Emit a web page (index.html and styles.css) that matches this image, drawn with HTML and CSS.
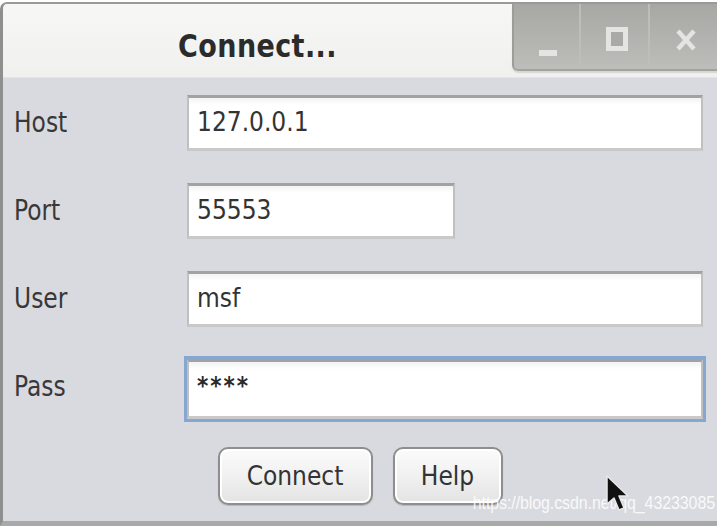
FILE: index.html
```html
<!DOCTYPE html>
<html lang="en">
<head>
<meta charset="utf-8">
<title>Connect...</title>
<link rel="stylesheet" href="styles.css">
</head>
<body>
<div class="window">
  <div class="titlebar">
    <div class="title">Connect...</div>
    <div class="wm-buttons">
      <div class="wm-btn wm-min">
        <svg class="wm-icon" viewBox="0 0 24 24" width="24" height="24"><rect x="3" y="17" width="18" height="6" fill="#e4e4e2"/></svg>
      </div>
      <div class="wm-btn wm-max">
        <svg class="wm-icon" viewBox="0 0 24 24" width="24" height="24"><rect x="3.5" y="2.5" width="17" height="19" fill="#a9a9a6" stroke="#e4e4e2" stroke-width="5"/></svg>
      </div>
      <div class="wm-btn wm-close">
        <svg class="wm-icon" viewBox="0 0 24 24" width="24" height="24"><path d="M4 3 L20 21 M20 3 L4 21" stroke="#e4e4e2" stroke-width="4.5" fill="none"/></svg>
      </div>
    </div>
  </div>
  <div class="content">
    <div class="form">
      <div class="label">Host</div>
      <div class="field"><span class="value">127.0.0.1</span></div>
      <div class="label">Port</div>
      <div class="field field-short"><span class="value">55553</span></div>
      <div class="label">User</div>
      <div class="field"><span class="value">msf</span></div>
      <div class="label">Pass</div>
      <div class="field field-focus"><span class="value value-pass">****</span></div>
    </div>
    <div class="actions">
      <button class="btn btn-connect">Connect</button>
      <button class="btn btn-help">Help</button>
    </div>
    <div class="watermark">https://blog.csdn.net/qq_43233085</div>
    <svg class="cursor" viewBox="0 0 30 40" width="30" height="40">
      <path d="M2 2 L2 30 L9 24 L14 36 L19 34 L14 22 L23 22 Z" fill="#111" stroke="#e8e8e8" stroke-width="1.5" stroke-linejoin="round"/>
    </svg>
  </div>
</div>
</body>
</html>
```
FILE: styles.css
```css
* { box-sizing: border-box; }

html, body {
  margin: 0;
  padding: 0;
  background: #ffffff;
}

body {
  width: 717px;
  height: 526px;
  overflow: hidden;
  font-family: "DejaVu Sans Condensed", "DejaVu Sans", sans-serif;
  font-stretch: condensed;
}

.window {
  margin-top: 2px;
  width: 717px;
  height: 524px;
  border-top: 2px solid #9a9a9a;
  border-left: 3px solid #8f8f8f;
  border-bottom: 5px solid #a9a9a9;
  border-top-left-radius: 7px;
  display: flex;
  flex-direction: column;
  overflow: hidden;
  background: #d9dadf;
}

.titlebar {
  height: 74px;
  flex: none;
  display: flex;
  align-items: flex-start;
  background: linear-gradient(#f7f7f6, #f0f0ef);
  border-bottom: 1px solid #e4e4e6;
}

.title {
  flex: 1;
  text-align: center;
  font-size: 30px;
  font-weight: bold;
  line-height: 30px;
  padding-top: 27px;
  color: #2b2b2b;
  letter-spacing: 0.4px;
  transform: scaleY(1.06);
}

.wm-buttons {
  width: 205px;
  height: 67px;
  display: flex;
  background: linear-gradient(#a7a7a4, #b6b6b3 70%, #bdbdba);
  border-left: 2px solid #9c9c99;
  border-bottom: 2px solid #a2a29f;
  border-bottom-left-radius: 6px;
  box-shadow: 0 2px 1px #d6d6d4;
}

.wm-btn {
  flex: 1;
  display: flex;
  align-items: center;
  justify-content: center;
  border-left: 2px solid #bdbdba;
}

.wm-btn:first-child { border-left: none; }

.wm-min { padding-top: 16px; padding-left: 2px; }
.wm-max { padding-top: 4px; padding-left: 4px; }
.wm-close { padding-top: 6px; padding-left: 4px; }

.wm-icon { display: block; }

.content {
  flex: 1;
  position: relative;
  padding-top: 17px;
  padding-right: 14px;
}

.form {
  display: grid;
  grid-template-columns: 184px 1fr;
  grid-auto-rows: 56px;
  row-gap: 32px;
  align-items: center;
}

.label {
  padding-left: 11px;
  font-size: 26px;
  color: #383838;
  padding-bottom: 2px;
  transform: scaleY(1.08);
}

.field {
  height: 56px;
  background: linear-gradient(#f3f3f3, #ffffff 14%);
  border-top: 3px solid #a2a2a2;
  border-left: 2px solid #c0c0c0;
  border-right: 2px solid #c0c0c0;
  border-bottom: 3px solid #c9c9c9;
  display: flex;
  align-items: center;
  padding-left: 8px;
}

.field-short { width: 268px; }

.field-focus {
  height: 60px;
  margin-top: 4px;
  box-shadow: 0 0 0 3px #86a7d0;
  align-items: flex-start;
  padding-top: 10px;
}

.value {
  font-size: 26px;
  color: #333;
  padding-bottom: 2px;
}

.value-pass {
  font-size: 24px;
  font-weight: bold;
  letter-spacing: 2px;
  color: #2a2a2a;
}

.actions {
  margin-top: 32px;
  padding-left: 14px;
  display: flex;
  justify-content: center;
  gap: 20px;
}

.btn {
  height: 58px;
  font-family: "DejaVu Sans Condensed", "DejaVu Sans", sans-serif;
  font-stretch: condensed;
  font-size: 26px;
  color: #333;
  border: 2px solid #8e8e8e;
  border-radius: 10px;
  background: linear-gradient(#fbfbfb, #f1f1f1 50%, #e3e3e3);
  box-shadow: inset 0 0 0 2px #ffffff, 0 1px 1px #b8b8b8;
  padding: 0;
}

.btn-connect { width: 155px; }
.btn-help { width: 110px; }

.watermark {
  position: absolute;
  right: 2px;
  bottom: 7px;
  font-family: "Liberation Sans", Arial, sans-serif;
  font-size: 16px;
  color: rgba(255, 255, 255, 0.85);
  letter-spacing: -0.1px;
  transform: scaleY(1.15);
  transform-origin: bottom right;
}

.cursor {
  position: absolute;
  left: 602px;
  top: 396px;
}
```
